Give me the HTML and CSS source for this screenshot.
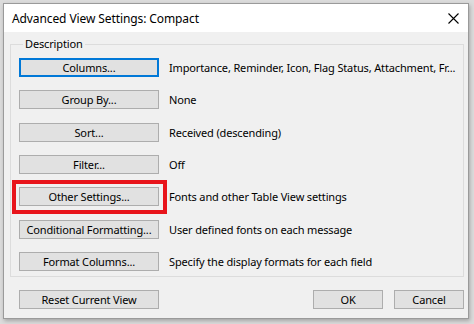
FILE: index.html
```html
<!DOCTYPE html>
<html>
<head>
<meta charset="utf-8">
<link rel="stylesheet" href="styles.css">
</head>
<body>
<div class="dialog">
  <div class="titlebar">
    <span class="title">Advanced View Settings: Compact</span>
    <svg class="close" width="11" height="11" viewBox="0 0 11 11"><path d="M0.5 0.5 L10.5 10.5 M10.5 0.5 L0.5 10.5" stroke="#000" stroke-width="1.1" fill="none"/></svg>
  </div>
  <div class="content">
    <fieldset class="group">
      <legend>Description</legend>
      <div class="rows">
        <button class="btn default">Columns...</button><span class="desc">Importance, Reminder, Icon, Flag Status, Attachment, Fr...</span>
        <button class="btn">Group By...</button><span class="desc">None</span>
        <button class="btn">Sort...</button><span class="desc">Received (descending)</span>
        <button class="btn">Filter...</button><span class="desc">Off</span>
        <span class="highlight"><button class="btn">Other Settings...</button></span><span class="desc">Fonts and other Table View settings</span>
        <button class="btn">Conditional Formatting...</button><span class="desc">User defined fonts on each message</span>
        <button class="btn">Format Columns...</button><span class="desc">Specify the display formats for each field</span>
      </div>
    </fieldset>
    <div class="footer">
      <button class="btn">Reset Current View</button>
      <div class="right">
        <button class="btn small">OK</button>
        <button class="btn small">Cancel</button>
      </div>
    </div>
  </div>
</div>
</body>
</html>
```
FILE: styles.css
```css
html, body {
  margin: 0;
  padding: 0;
}
body {
  width: 474px;
  height: 324px;
  background: #dcdcdc;
  font-family: "Noto Sans", "DejaVu Sans", sans-serif;
  font-size: 11px;
  letter-spacing: -0.15px;
  color: #000;
  overflow: hidden;
}
.dialog {
  margin: 3px 0 0 3px;
  width: 466px;
  height: 316px;
  box-sizing: border-box;
  border: 1px solid #9a9a9a;
  background: #f0f0f0;
  display: flex;
  flex-direction: column;
  box-shadow: 1px 2px 4px rgba(0,0,0,0.25);
}
.titlebar {
  height: 28px;
  background: #fff;
  display: flex;
  align-items: center;
  justify-content: space-between;
  padding: 0 9px 0 8px;
}
.title {
  font-size: 12px;
  letter-spacing: -0.1px;
}
.close {
  display: block;
}
.content {
  flex: 1;
  display: flex;
  flex-direction: column;
  padding: 4px 4px 6px 6px;
}
.group {
  margin: 0;
  border: 1px solid #dcdcdc;
  padding: 6px 8px 5px 8px;
  min-width: 0;
}
.group legend {
  padding: 0 2px;
  margin-left: 4px;
  line-height: 16px;
}
.rows {
  display: grid;
  grid-template-columns: 140px 1fr;
  column-gap: 10px;
  row-gap: 13.33px;
  align-items: center;
}
.btn {
  width: 140px;
  height: 19px;
  box-sizing: border-box;
  margin: 0;
  padding: 0;
  background: #e1e1e1;
  border: 1px solid #adadad;
  font-family: inherit;
  font-size: 11px;
  letter-spacing: -0.15px;
  color: #000;
  line-height: 17px;
}
.btn.default {
  border: 2px solid #0078d7;
  line-height: 15px;
}
.btn.small {
  width: 70px;
}
.desc {
  white-space: nowrap;
  line-height: 19px;
}
.highlight {
  position: relative;
  display: block;
  height: 19px;
}
.highlight::after {
  content: "";
  position: absolute;
  left: -7px;
  top: -7px;
  right: -8px;
  bottom: -8px;
  border: 4px solid #e8141b;
  pointer-events: none;
}
.highlight .btn {
  display: block;
}
.footer {
  margin-top: 13px;
  padding-left: 9px;
  display: flex;
  justify-content: space-between;
}
.right {
  display: flex;
  gap: 11px;
}
```
